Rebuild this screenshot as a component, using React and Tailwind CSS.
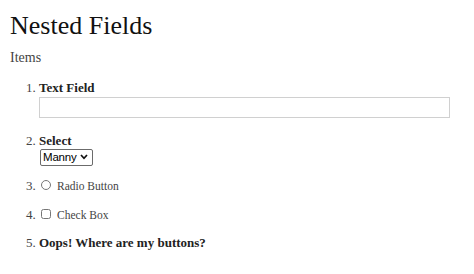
import React from 'react'

export default function App() {
  return (
    <div className="bg-white text-[#222] px-[10px] pt-[10px] w-[474px] h-[274px]" style={{ fontFamily: '"Liberation Serif", Georgia, serif' }}>
      <h1 className="text-[26px] leading-[32px] text-[#111]">Nested Fields</h1>
      <p className="text-[14px] leading-[18px] mt-[7px] text-[#444]">Items</p>

      <ol className="list-decimal pl-[29px] mt-[14px] text-[13px] leading-[14px] marker:text-[#444] marker:text-[13px]">
        <li>
          <div className="font-bold">Text Field</div>
          <input type="text" className="block w-[411px] h-[21px] border border-[#d0d0d0] mt-[2px] bg-white" />
        </li>
        <li className="mt-[16px]">
          <div className="font-bold">Select</div>
          <span className="relative inline-block mt-[1px] ml-[1px]">
            <select className="block appearance-none border border-[#6b6b6b] rounded-[2px] text-[11.5px] tracking-[-0.2px] leading-[15px] h-[17px] w-[53px] pl-[2px] pr-[12px] text-black bg-white" style={{ fontFamily: '"Liberation Sans", Arial, sans-serif' }}>
              <option>Manny</option>
              <option>Moe</option>
              <option>Jack</option>
            </select>
            <svg className="absolute right-[5px] top-[5px] pointer-events-none" width="8" height="6" viewBox="0 0 8 6">
              <path d="M1 1 L4 4.3 L7 1" fill="none" stroke="#111" strokeWidth="1.7" />
            </svg>
          </span>
        </li>
        <li className="mt-[12px] leading-[16px]">
          <input type="radio" name="r" className="w-[10px] h-[10px] m-0 ml-[2px] mr-[6px] align-baseline" />
          <span className="text-[11.5px] text-[#444]">Radio Button</span>
        </li>
        <li className="mt-[13px] leading-[16px]">
          <input type="checkbox" className="w-[10px] h-[10px] m-0 ml-[2px] mr-[6px] align-baseline" />
          <span className="text-[11.5px] text-[#444]">Check Box</span>
        </li>
        <li className="mt-[13px]">
          <div className="font-bold">Oops! Where are my buttons?</div>
        </li>
      </ol>
    </div>
  )
}
